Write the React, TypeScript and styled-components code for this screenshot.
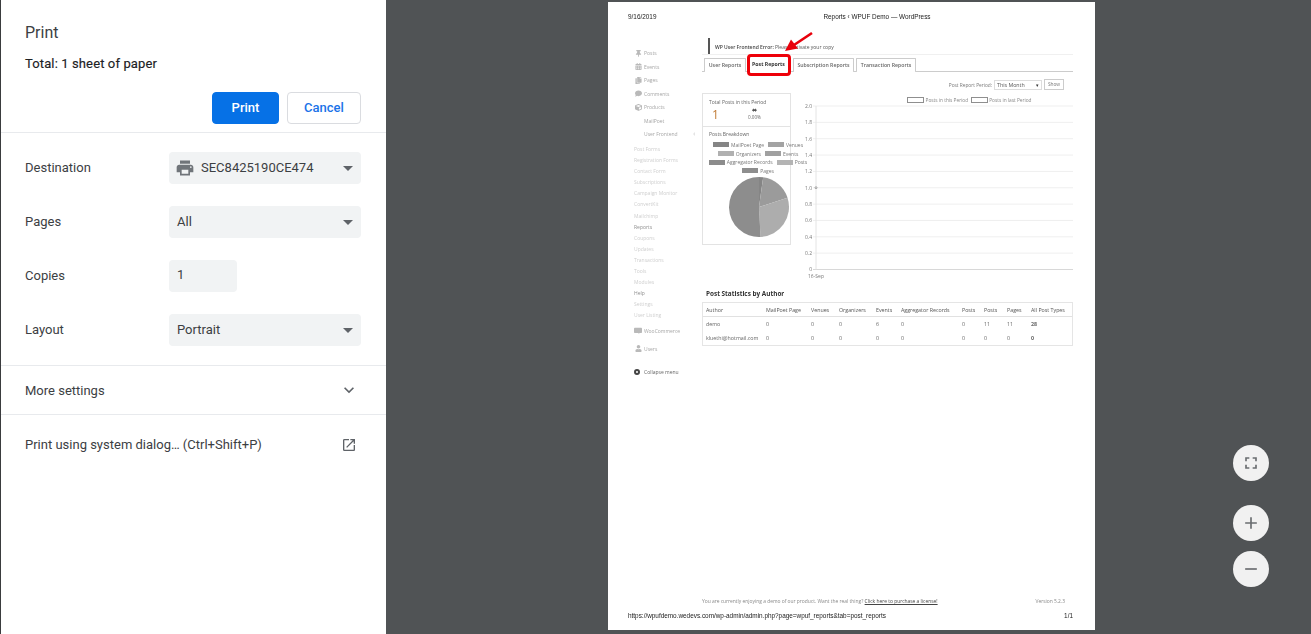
import styled, { createGlobalStyle } from "styled-components";
import { MdAdd, MdExpandMore, MdFullscreen, MdOpenInNew, MdPrint, MdRemove } from "react-icons/md";
import { FaCalendarAlt, FaComment, FaCopy, FaCube, FaThumbtack, FaUser } from "react-icons/fa";
import type { ReactNode } from "react";

const GlobalStyle = createGlobalStyle`
  html, body { margin: 0; padding: 0; height: 100%; overflow: hidden; }
  * { box-sizing: border-box; }
`;

interface SideEntry {
  label: string;
  height: number;
  gap?: number;
  indent?: boolean;
  open?: boolean;
  tone?: "strong" | "normal" | "faint";
  icon?: ReactNode;
}

const sideEntries: SideEntry[] = [
  { label: "Posts", height: 13.5, icon: <FaThumbtack /> },
  { label: "Events", height: 13.5, icon: <FaCalendarAlt /> },
  { label: "Pages", height: 13.5, icon: <FaCopy /> },
  { label: "Comments", height: 13.5, icon: <FaComment /> },
  { label: "Products", height: 13.5, icon: <FaCube /> },
  { label: "MailPoet", height: 13.5, indent: true },
  { label: "User Frontend", height: 13.5, indent: true, open: true },
  { label: "Post Forms", height: 11.1, gap: 2.7, tone: "faint" },
  { label: "Registration Forms", height: 11.1, tone: "faint" },
  { label: "Contact Form", height: 11.1, tone: "faint" },
  { label: "Subscriptions", height: 11.1, tone: "faint" },
  { label: "Campaign Monitor", height: 11.1, tone: "faint" },
  { label: "ConvertKit", height: 11.1, tone: "faint" },
  { label: "Mailchimp", height: 11.1, tone: "faint" },
  { label: "Reports", height: 11.1, tone: "strong" },
  { label: "Coupons", height: 11.1, tone: "faint" },
  { label: "Updates", height: 11.1, tone: "faint" },
  { label: "Transactions", height: 11.1, tone: "faint" },
  { label: "Tools", height: 11.1, tone: "faint" },
  { label: "Modules", height: 11.1, tone: "faint" },
  { label: "Help", height: 11.1, tone: "strong" },
  { label: "Settings", height: 11.1, tone: "faint" },
  { label: "User Listing", height: 11.1, tone: "faint" },
  { label: "WooCommerce", height: 13.5, gap: 3, icon: <WooMark /> },
  { label: "Users", height: 13.5, gap: 4.5, icon: <FaUser /> },
];

const tabs = [
  { label: "User Reports", width: 42 },
  { label: "Post Reports", width: 38, active: true },
  { label: "Subscription Reports", width: 61 },
  { label: "Transaction Reports", width: 60 },
];

const pieLegend = [
  { label: "MailPoet Page", color: "#858585" },
  { label: "Venues", color: "#a3a3a3" },
  { label: "Organizers", color: "#b0b0b0" },
  { label: "Events", color: "#a0a0a0" },
  { label: "Aggregator Records", color: "#8c8c8c" },
  { label: "Posts", color: "#b4b4b4" },
  { label: "Pages", color: "#8e8e8e" },
];

const pieSlices = [
  { from: 0, to: 8, color: "#858585" },
  { from: 8, to: 72, color: "#9b9b9b" },
  { from: 72, to: 177, color: "#adadad" },
  { from: 177, to: 360, color: "#8d8d8d" },
];

const tableColumns = "60px 45px 28px 37px 25px 61px 22px 23px 24px 1fr";
const tableHead = ["Author", "MailPoet Page", "Venues", "Organizers", "Events", "Aggregator Records", "Posts", "Posts", "Pages", "All Post Types"];
const tableRows = [
  ["demo", "0", "0", "0", "6", "0", "0", "11", "11", "28"],
  ["kluethi@hotmail.com", "0", "0", "0", "0", "0", "0", "0", "0", "0"],
];

const chartTicks = ["2.0", "1.8", "1.6", "1.4", "1.2", "1.0", "0.8", "0.6", "0.4", "0.2", "0"];

function WooMark() {
  return (
    <svg viewBox="0 0 10 8" width="10" height="8">
      <rect width="10" height="6.5" rx="1" fill="currentColor" />
      <path d="M5 6 L6.5 8 L6.5 6 Z" fill="currentColor" />
    </svg>
  );
}

function slicePath(from: number, to: number, r: number) {
  const point = (deg: number) => {
    const rad = (deg * Math.PI) / 180;
    return `${(r * Math.sin(rad)).toFixed(2)} ${(-r * Math.cos(rad)).toFixed(2)}`;
  };
  const large = to - from > 180 ? 1 : 0;
  return `M0 0 L${point(from)} A${r} ${r} 0 ${large} 1 ${point(to)} Z`;
}

const Caret = () => (
  <SC.Caret viewBox="0 0 12 6">
    <path d="M0 0 H12 L6 6 Z" fill="currentColor" />
  </SC.Caret>
);

const App = () => {
  return (
    <SC.Page>
      <GlobalStyle />
      <SC.Panel>
        <SC.PanelHeader>
          <SC.Title>Print</SC.Title>
          <SC.Total>Total: 1 sheet of paper</SC.Total>
          <SC.Actions>
            <SC.Button $primary>Print</SC.Button>
            <SC.Button>Cancel</SC.Button>
          </SC.Actions>
        </SC.PanelHeader>
        <SC.Settings>
          <SC.SettingRow>
            <SC.SettingLabel>Destination</SC.SettingLabel>
            <SC.Select>
              <SC.PrinterIcon>
                <MdPrint />
              </SC.PrinterIcon>
              <SC.SelectText>SEC8425190CE474</SC.SelectText>
              <Caret />
            </SC.Select>
          </SC.SettingRow>
          <SC.SettingRow>
            <SC.SettingLabel>Pages</SC.SettingLabel>
            <SC.Select>
              <SC.SelectText>All</SC.SelectText>
              <Caret />
            </SC.Select>
          </SC.SettingRow>
          <SC.SettingRow>
            <SC.SettingLabel>Copies</SC.SettingLabel>
            <SC.CopiesInput>1</SC.CopiesInput>
          </SC.SettingRow>
          <SC.SettingRow>
            <SC.SettingLabel>Layout</SC.SettingLabel>
            <SC.Select>
              <SC.SelectText>Portrait</SC.SelectText>
              <Caret />
            </SC.Select>
          </SC.SettingRow>
        </SC.Settings>
        <SC.MoreRow>
          <span>More settings</span>
          <SC.MoreIcon>
            <MdExpandMore />
          </SC.MoreIcon>
        </SC.MoreRow>
        <SC.SystemRow>
          <span>Print using system dialog… (Ctrl+Shift+P)</span>
          <SC.SystemIcon>
            <MdOpenInNew />
          </SC.SystemIcon>
        </SC.SystemRow>
      </SC.Panel>

      <SC.Preview>
        <SC.Sheet>
          <SC.SheetHeader>
            <span>9/16/2019</span>
            <SC.SheetTitle>Reports ‹ WPUF Demo — WordPress</SC.SheetTitle>
          </SC.SheetHeader>

          <SC.SheetBody>
            <SC.Sidebar>
              {sideEntries.map((item) => (
                <SC.SideItem key={item.label} $height={item.height} $gap={item.gap} $indent={item.indent} $tone={item.tone}>
                  {item.icon && <SC.SideIcon>{item.icon}</SC.SideIcon>}
                  {item.label}
                  {item.open && <SC.SideOpenMark />}
                </SC.SideItem>
              ))}
              <SC.Collapse>
                <SC.CollapseDot />
                Collapse menu
              </SC.Collapse>
            </SC.Sidebar>

            <SC.Main>
              <SC.Notice>
                <b>WP User Frontend Error:</b> Please activate your copy
              </SC.Notice>
              <SC.Tabs>
                {tabs.map((tab) => (
                  <SC.Tab key={tab.label} $width={tab.width} $active={tab.active}>
                    {tab.label}
                  </SC.Tab>
                ))}
                <SC.Arrow viewBox="0 0 34 24">
                  <path d="M29 2 L11 14" stroke="#e8000b" strokeWidth="2.6" fill="none" />
                  <path d="M2 20 L8 8.5 L15 17.5 Z" fill="#e8000b" />
                </SC.Arrow>
              </SC.Tabs>

              <SC.PeriodRow>
                <span>Post Report Period:</span>
                <SC.PeriodSelect>
                  This Month
                  <SC.PeriodCaret>▾</SC.PeriodCaret>
                </SC.PeriodSelect>
                <SC.ShowButton>Show</SC.ShowButton>
              </SC.PeriodRow>

              <SC.Reports>
                <SC.StatsCard>
                  <SC.TotalBlock>
                    <div>Total Posts in this Period</div>
                    <SC.TotalFigures>
                      <SC.TotalNumber>1</SC.TotalNumber>
                      <SC.Change>
                        <b>⬌</b>
                        <span>0.00%</span>
                      </SC.Change>
                    </SC.TotalFigures>
                  </SC.TotalBlock>
                  <SC.Breakdown>
                    <div>Posts Breakdown</div>
                    <SC.PieLegend>
                      {pieLegend.map((entry) => (
                        <SC.PieLegendItem key={entry.label}>
                          <SC.PieSwatch $color={entry.color} />
                          {entry.label}
                        </SC.PieLegendItem>
                      ))}
                    </SC.PieLegend>
                    <SC.Pie viewBox="-31 -31 62 62">
                      {pieSlices.map((s) => (
                        <path key={s.from} d={slicePath(s.from, s.to, 30)} fill={s.color} />
                      ))}
                    </SC.Pie>
                  </SC.Breakdown>
                </SC.StatsCard>

                <SC.ChartArea>
                  <SC.ChartLegend>
                    <SC.ChartSwatch />
                    <span>Posts in this Period</span>
                    <SC.ChartSwatch />
                    <span>Posts in last Period</span>
                  </SC.ChartLegend>
                  <SC.Chart viewBox="0 0 270 176">
                    {chartTicks.map((tick, i) => {
                      const y = 2 + i * 16.35;
                      return (
                        <g key={tick}>
                          <line x1="10" x2="270" y1={y} y2={y} stroke={i === 10 ? "#d8d8d8" : "#efefef"} strokeWidth="1" />
                          <text x="9" y={y + 1.8} textAnchor="end" fontSize="5" fill="#777" fontFamily="Open Sans, sans-serif">
                            {tick}
                          </text>
                        </g>
                      );
                    })}
                    <line x1="13" x2="13" y1="2" y2="165.5" stroke="#e4e4e4" strokeWidth="1" />
                    <circle cx="13" cy="83.7" r="1" fill="none" stroke="#777" strokeWidth="0.6" />
                    <text x="5" y="174" fontSize="5" fill="#777" fontFamily="Open Sans, sans-serif">
                      16-Sep
                    </text>
                  </SC.Chart>
                </SC.ChartArea>
              </SC.Reports>

              <SC.StatsHeading>Post Statistics by Author</SC.StatsHeading>
              <SC.StatsTable>
                <SC.TableHead>
                  {tableHead.map((cell, i) => (
                    <span key={i}>{cell}</span>
                  ))}
                </SC.TableHead>
                {tableRows.map((row) => (
                  <SC.TableRow key={row[0]}>
                    {row.map((cell, i) => (
                      <SC.TableCell key={i} $strong={i === 9}>
                        {cell}
                      </SC.TableCell>
                    ))}
                  </SC.TableRow>
                ))}
              </SC.StatsTable>
            </SC.Main>
          </SC.SheetBody>

          <SC.DemoRow>
            <span>
              You are currently enjoying a demo of our product. Want the real thing? <u>Click here to purchase a license!</u>
            </span>
            <span>Version 5.2.3</span>
          </SC.DemoRow>
          <SC.SheetFooter>
            <span>https://wpufdemo.wedevs.com/wp-admin/admin.php?page=wpuf_reports&tab=post_reports</span>
            <span>1/1</span>
          </SC.SheetFooter>
        </SC.Sheet>

        <SC.ZoomControls>
          <SC.ZoomButton>
            <MdFullscreen />
          </SC.ZoomButton>
          <SC.ZoomGroup>
            <SC.ZoomButton>
              <MdAdd />
            </SC.ZoomButton>
            <SC.ZoomButton>
              <MdRemove />
            </SC.ZoomButton>
          </SC.ZoomGroup>
        </SC.ZoomControls>
      </SC.Preview>
    </SC.Page>
  );
};

export default App;

const sideColors = { strong: "#8f8f8f", normal: "#a6a6a6", faint: "#cfcfcf" };

const SC = {
  Page: styled("div")`
    display: flex;
    width: 1311px;
    height: 634px;
    overflow: hidden;
    font-family: Roboto, "Liberation Sans", sans-serif;
  `,
  Panel: styled("aside")`
    width: 386px;
    flex: none;
    background: #fff;
    border-left: 1px solid #3a3c3e;
    color: #202124;
    font-size: 13px;
  `,
  PanelHeader: styled("header")`
    padding: 23px 25px 8px 24px;
    border-bottom: 1px solid #e8eaed;
  `,
  Title: styled("div")`
    font-size: 16px;
    line-height: 20px;
    color: #3c4043;
  `,
  Total: styled("div")`
    margin-top: 11px;
    font-size: 13px;
    font-weight: 400;
    line-height: 20px;
    letter-spacing: 0.12px;
    color: #202124;
    -webkit-text-stroke: 0.15px #202124;
  `,
  Actions: styled("div")`
    display: flex;
    justify-content: flex-end;
    gap: 8px;
    margin-top: 18px;
  `,
  Button: styled("button")<{ $primary?: boolean }>`
    height: 32px;
    padding: 0 0 2px;
    width: ${({ $primary }) => ($primary ? "67px" : "74px")};
    border-radius: 4px;
    border: 1px solid ${({ $primary }) => ($primary ? "#0671e6" : "#dadce0")};
    background: ${({ $primary }) => ($primary ? "#0671e6" : "#fff")};
    color: ${({ $primary }) => ($primary ? "#fff" : "#1a73e8")};
    font: 500 13px Roboto, sans-serif;
  `,
  Settings: styled("section")`
    display: flex;
    flex-direction: column;
    gap: 22px;
    padding: 19px 25px 19px 24px;
    border-bottom: 1px solid #e8eaed;
  `,
  SettingRow: styled("div")`
    display: flex;
    align-items: center;
    height: 32px;
  `,
  SettingLabel: styled("div")`
    width: 144px;
    flex: none;
    padding-bottom: 2px;
    font-size: 13px;
    color: #3c4043;
  `,
  Select: styled("div")`
    display: flex;
    align-items: center;
    width: 192px;
    height: 32px;
    padding: 0 6px 0 8px;
    background: #f1f3f4;
    border-radius: 4px;
    color: #3c4043;
  `,
  SelectText: styled("span")`
    flex: 1;
    padding-bottom: 2px;
    font-size: 13px;
  `,
  PrinterIcon: styled("span")`
    display: flex;
    width: 24px;
    font-size: 20px;
    color: #70757a;
    margin-left: -2px;
    margin-right: 2px;
  `,
  Caret: styled("svg")`
    width: 10px;
    height: 5px;
    color: #5f6368;
    margin-right: 2px;
  `,
  CopiesInput: styled("div")`
    width: 68px;
    height: 32px;
    padding-left: 8px;
    line-height: 30px;
    background: #f1f3f4;
    border-radius: 4px;
    color: #3c4043;
  `,
  MoreRow: styled("div")`
    display: flex;
    align-items: center;
    justify-content: space-between;
    height: 49px;
    padding: 0 27px 0 24px;
    border-bottom: 1px solid #e8eaed;
    color: #3c4043;
  `,
  MoreIcon: styled("span")`
    display: flex;
    font-size: 20px;
    color: #5f6368;
  `,
  SystemRow: styled("div")`
    display: flex;
    align-items: center;
    justify-content: space-between;
    height: 59px;
    padding: 0 29px 0 24px;
    color: #3c4043;
  `,
  SystemIcon: styled("span")`
    display: flex;
    font-size: 16px;
    color: #5f6368;
  `,
  Preview: styled("main")`
    position: relative;
    flex: 1;
    padding: 2px 0 0 222px;
    background: #505355;
  `,
  Sheet: styled("div")`
    display: flex;
    flex-direction: column;
    width: 487px;
    height: 628px;
    padding: 11px 22px 0 20px;
    background: #fff;
    color: #444;
    font-family: "Open Sans", sans-serif;
    font-size: 5px;
    filter: blur(0.35px);
  `,
  SheetHeader: styled("div")`
    display: flex;
    height: 8px;
    color: #222;
    font: 6.4px / 8px "Liberation Sans", sans-serif;
  `,
  SheetTitle: styled("span")`
    margin-left: 167px;
  `,
  SheetBody: styled("div")`
    display: flex;
    flex: 1;
    margin-top: 17px;
  `,
  Sidebar: styled("nav")`
    width: 74px;
    flex: none;
    padding: 8.25px 0 0 6px;
  `,
  SideItem: styled("div")<{ $height: number; $gap?: number; $indent?: boolean; $tone?: "strong" | "normal" | "faint" }>`
    display: flex;
    align-items: center;
    height: ${({ $height }) => $height}px;
    margin-top: ${({ $gap }) => $gap ?? 0}px;
    padding-left: ${({ $indent }) => ($indent ? "10px" : "0")};
    color: ${({ $tone }) => sideColors[$tone ?? "normal"]};
    white-space: nowrap;
  `,
  SideIcon: styled("span")`
    display: flex;
    justify-content: center;
    width: 8px;
    margin-right: 2px;
    font-size: 7px;
    color: #b9b9b9;
  `,
  SideOpenMark: styled("i")`
    margin-left: 15px;
    border-style: solid;
    border-width: 2.5px 2.5px 2.5px 0;
    border-color: transparent #e4e4e4 transparent transparent;
  `,
  Collapse: styled("div")`
    display: flex;
    align-items: center;
    gap: 4px;
    margin-top: 10px;
    height: 13px;
    color: #666;
  `,
  CollapseDot: styled("span")`
    width: 6px;
    height: 6px;
    border-radius: 50%;
    background: #fff;
    border: 2px solid #444;
  `,
  Main: styled("div")`
    flex: 1;
    min-width: 0;
  `,
  Notice: styled("div")`
    height: 16px;
    margin-left: 6px;
    padding-left: 5px;
    border-left: 2px solid #555;
    line-height: 18px;
    color: #555;
    b {
      font-weight: 600;
      color: #444;
    }
  `,
  Tabs: styled("div")`
    position: relative;
    display: flex;
    align-items: flex-end;
    gap: 2px;
    height: 18px;
    padding-left: 2px;
    border-top: 1px solid #f0f0f0;
    border-bottom: 1px solid #ccc;
  `,
  Tab: styled("div")<{ $width: number; $active?: boolean }>`
    position: relative;
    width: ${({ $width }) => $width}px;
    height: ${({ $active }) => ($active ? "16px" : "14px")};
    margin: ${({ $active }) => ($active ? "0 3.5px -2px 1.5px" : "0 0 -1px")};
    border: ${({ $active }) => ($active ? "none" : "1px solid #ccc")};
    border-bottom: none;
    background: #fff;
    text-align: center;
    font-size: 5.2px;
    font-weight: ${({ $active }) => ($active ? 700 : 600)};
    line-height: ${({ $active }) => ($active ? "15px" : "13px")};
    white-space: nowrap;
    color: ${({ $active }) => ($active ? "#333" : "#666")};
    outline: ${({ $active }) => ($active ? "3px solid #ee0009" : "none")};
    border-radius: 1px;
  `,
  Arrow: styled("svg")`
    position: absolute;
    left: 81px;
    top: -24px;
    width: 34px;
    height: 24px;
    z-index: 1;
  `,
  PeriodRow: styled("div")`
    display: flex;
    align-items: center;
    justify-content: flex-end;
    gap: 2px;
    height: 11px;
    margin-top: 7px;
    padding-right: 9px;
    color: #777;
    font-size: 4.8px;
  `,
  PeriodSelect: styled("div")`
    display: flex;
    justify-content: space-between;
    align-items: center;
    width: 48px;
    height: 10px;
    padding: 0 2px;
    border: 1px solid #ddd;
    color: #555;
    font-size: 5.3px;
  `,
  PeriodCaret: styled("span")`
    font-size: 5px;
    color: #333;
  `,
  ShowButton: styled("div")`
    width: 20px;
    height: 11px;
    border: 1px solid #ccc;
    text-align: center;
    line-height: 9px;
    color: #777;
  `,
  Reports: styled("div")`
    display: flex;
    margin-top: 3px;
  `,
  StatsCard: styled("div")`
    width: 89px;
    height: 152px;
    flex: none;
    border: 1px solid #e3e3e3;
    color: #666;
  `,
  TotalBlock: styled("div")`
    height: 33px;
    padding: 5px 6px 0;
    border-bottom: 1px solid #e3e3e3;
  `,
  TotalFigures: styled("div")`
    display: flex;
    margin-top: 1px;
    padding-left: 3px;
  `,
  TotalNumber: styled("div")`
    width: 36px;
    margin-top: 2px;
    font-size: 12px;
    line-height: 14px;
    color: #c07a33;
  `,
  Change: styled("div")`
    display: flex;
    flex-direction: column;
    align-items: center;
    font-size: 4.6px;
    b {
      font-size: 6px;
      line-height: 8px;
      color: #555;
    }
  `,
  Breakdown: styled("div")`
    padding: 4px 6px 0;
  `,
  PieLegend: styled("div")`
    position: relative;
    display: flex;
    flex-wrap: wrap;
    justify-content: center;
    width: 104px;
    margin: 4px 0 0 -3px;
    row-gap: 1px;
    column-gap: 4px;
    color: #777;
  `,
  PieLegendItem: styled("div")`
    display: flex;
    align-items: center;
    gap: 2px;
    height: 7.7px;
    white-space: nowrap;
  `,
  PieSwatch: styled("span")<{ $color: string }>`
    width: 16px;
    height: 5px;
    background: ${({ $color }) => $color};
  `,
  Pie: styled("svg")`
    display: block;
    width: 62px;
    height: 62px;
    margin: 1px 0 0 19px;
  `,
  ChartArea: styled("div")`
    flex: 1;
    padding-left: 12px;
    min-width: 0;
  `,
  ChartLegend: styled("div")`
    display: flex;
    align-items: center;
    gap: 1.5px;
    height: 7px;
    margin-top: 3px;
    padding-left: 104px;
    color: #888;
    font-size: 4.8px;
    white-space: nowrap;
    span:nth-child(2) {
      margin-right: 1px;
    }
  `,
  ChartSwatch: styled("i")`
    width: 17px;
    height: 6px;
    border: 1.4px solid #8f8f8f;
  `,
  Chart: styled("svg")`
    display: block;
    width: 270px;
    height: 176px;
    margin-top: 1px;
  `,
  StatsHeading: styled("div")`
    margin-top: 10px;
    padding-left: 4px;
    font-size: 6.4px;
    font-weight: 700;
    line-height: 8px;
    color: #333;
  `,
  StatsTable: styled("div")`
    margin-top: 4px;
    border: 1px solid #e5e5e5;
    color: #666;
  `,
  TableHead: styled("div")`
    display: grid;
    grid-template-columns: ${tableColumns};
    align-items: center;
    height: 14px;
    padding-left: 3px;
    border-bottom: 1px solid #e1e1e1;
    font-size: 5.3px;
    white-space: nowrap;
    color: #555;
  `,
  TableRow: styled("div")`
    display: grid;
    grid-template-columns: ${tableColumns};
    align-items: center;
    height: 14px;
    padding-left: 3px;
    font-size: 5.3px;
  `,
  TableCell: styled("span")<{ $strong?: boolean }>`
    font-weight: ${({ $strong }) => ($strong ? 700 : 400)};
    white-space: nowrap;
  `,
  DemoRow: styled("div")`
    display: flex;
    justify-content: space-between;
    margin-left: 74px;
    padding-right: 8px;
    font-size: 4.92px;
    line-height: 8px;
    color: #888;
    u {
      color: #444;
    }
  `,
  SheetFooter: styled("div")`
    display: flex;
    justify-content: space-between;
    margin-top: 7px;
    height: 18px;
    font: 6.4px / 8px "Liberation Sans", sans-serif;
    color: #222;
  `,
  ZoomControls: styled("div")`
    position: absolute;
    top: 445px;
    left: 847px;
    display: flex;
    flex-direction: column;
    gap: 24px;
  `,
  ZoomGroup: styled("div")`
    display: flex;
    flex-direction: column;
    gap: 10px;
  `,
  ZoomButton: styled("div")`
    display: flex;
    align-items: center;
    justify-content: center;
    width: 36px;
    height: 36px;
    border-radius: 50%;
    background: #f1f1f1;
    color: #6a6d70;
    font-size: 20px;
  `,
};
